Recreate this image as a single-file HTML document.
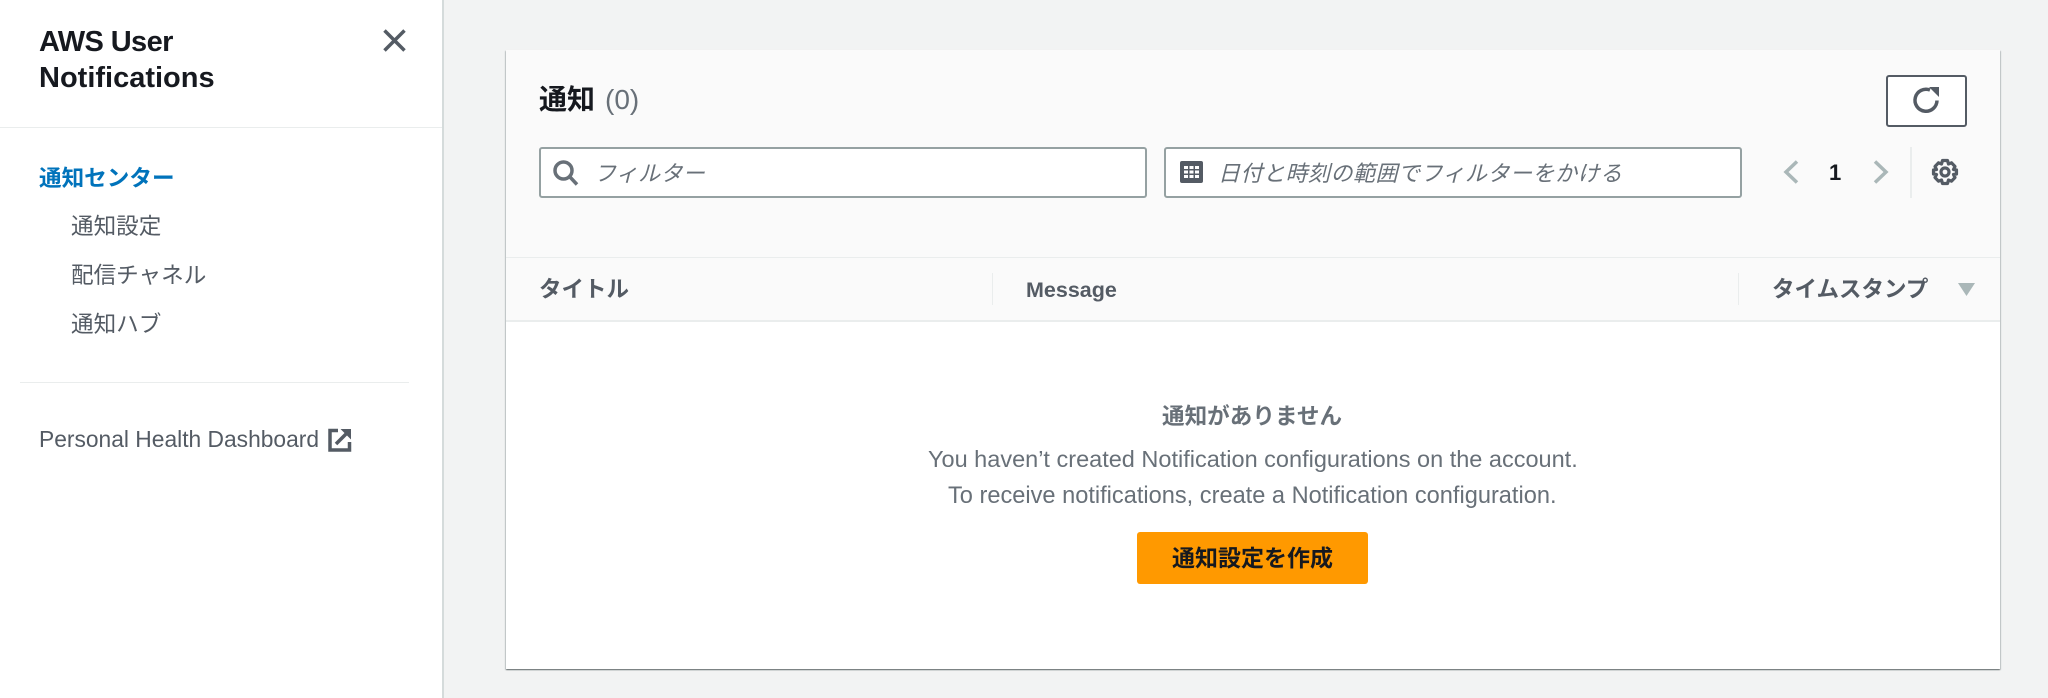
<!DOCTYPE html>
<html lang="ja">
<head>
<meta charset="utf-8">
<title>AWS User Notifications</title>
<style>
html,body{margin:0;padding:0;width:2048px;height:698px;overflow:hidden;background:#f2f3f3;}
body{position:relative;font-family:"Liberation Sans","Noto Sans CJK JP",sans-serif;color:#16191f;filter:blur(.35px);}
.a{position:absolute;}
.t{position:absolute;white-space:nowrap;line-height:36px;height:36px;}
.side{left:0;top:0;width:442px;height:698px;background:#fff;border-right:2px solid #d5dbdb;}
.card{left:506px;top:50px;width:1494px;height:619px;background:#fff;box-shadow:0 1px 1px 0 rgba(30,40,40,.5),1px 1px 1px 0 rgba(0,28,36,.15),-1px 1px 1px 0 rgba(0,28,36,.15);}
.head{left:506px;top:50px;width:1494px;height:271px;background:#fafafa;}
.box{background:#fff;border:2px solid #95a1a2;border-radius:3px;box-sizing:border-box;}
.nav{font-size:22.6px;color:#545b64;}
.ph{font-size:22px;font-style:italic;color:#687078;}
.th{font-size:22.5px;font-weight:bold;color:#545b64;}
.em{font-size:23.5px;color:#687078;}
.hr{background:#eaeded;}
svg{position:absolute;overflow:visible;}
</style>
</head>
<body>
<div class="a side"></div>
<div class="t" style="left:39px;top:24px;font-size:29px;font-weight:bold;letter-spacing:-.6px;">AWS User</div>
<div class="t" style="left:39px;top:60px;font-size:29px;font-weight:bold;">Notifications</div>
<svg style="left:383px;top:29px" width="23" height="23" viewBox="0 0 23 23"><path d="M1.500 1.500L21.500 21.500M21.500 1.500L1.500 21.500" stroke="#545b64" stroke-width="3.500" fill="none"/></svg>
<div class="a hr" style="left:0;top:127px;width:442px;height:1px;"></div>
<div class="t" style="left:39px;top:161px;font-size:22.6px;font-weight:bold;color:#0073bb;">通知センター</div>
<div class="t nav" style="left:71px;top:209px;">通知設定</div>
<div class="t nav" style="left:71px;top:258px;">配信チャネル</div>
<div class="t nav" style="left:71px;top:307px;">通知ハブ</div>
<div class="a hr" style="left:20px;top:382px;width:389px;height:1px;"></div>
<div class="t nav" style="left:39px;top:421px;font-size:22.8px;">Personal Health Dashboard</div>
<svg style="left:328px;top:428px" width="24" height="24" viewBox="0 0 24 24" fill="none" stroke="#545b64" stroke-width="3.500"><path d="M10 2.500H2V22H21.500V14"/><path d="M8 16L18 6"/><path d="M12.500 1H23V11.500Z" fill="#545b64" stroke="none"/></svg>

<div class="a card"></div>
<div class="a head"></div>
<div class="a hr" style="left:506px;top:257px;width:1494px;height:1px;"></div>
<div class="a hr" style="left:506px;top:320px;width:1494px;height:2px;"></div>
<div class="t" style="left:539px;top:82px;font-size:28px;font-weight:bold;">通知</div>
<div class="t" style="left:605px;top:82px;font-size:28px;color:#687078;">(0)</div>

<div class="a box" style="left:1886px;top:75px;width:81px;height:52px;border-color:#545b64;"></div>
<svg style="left:1912px;top:86px" width="28" height="28" viewBox="0 0 28 28" fill="none" stroke="#545b64" stroke-width="3.500"><path d="M25 14.500A11 11 0 1 1 18 4"/><path d="M17 1H27V11Z" fill="#545b64" stroke="none"/></svg>

<div class="a box" style="left:539px;top:147px;width:608px;height:51px;"></div>
<svg style="left:553px;top:160px" width="26" height="26" viewBox="0 0 26 26" fill="none" stroke="#687078" stroke-width="3.500"><circle cx="10.500" cy="10.500" r="8.500"/><path d="M16.500 16.500L24 24.500"/></svg>
<div class="t ph" style="left:594px;top:156px;letter-spacing:.3px;">フィルター</div>

<div class="a box" style="left:1164px;top:147px;width:578px;height:51px;"></div>
<svg style="left:1180px;top:161px" width="23" height="22" viewBox="0 0 23 22"><rect width="23" height="22" rx="2" fill="#545b64"/><g fill="#fff"><rect x="4" y="5" width="4" height="3"/><rect x="9.500" y="5" width="4" height="3"/><rect x="15" y="5" width="4" height="3"/><rect x="4" y="9.500" width="4" height="3"/><rect x="9.500" y="9.500" width="4" height="3"/><rect x="15" y="9.500" width="4" height="3"/><rect x="4" y="14" width="4" height="3"/><rect x="9.500" y="14" width="4" height="3"/><rect x="15" y="14" width="4" height="3"/></g></svg>
<div class="t ph" style="left:1218px;top:156px;letter-spacing:.5px;">日付と時刻の範囲でフィルターをかける</div>

<svg style="left:1783px;top:160px" width="16" height="24" viewBox="0 0 16 24" fill="none" stroke="#aab7b8" stroke-width="3.500"><path d="M14 1.500L3 12L14 22.500"/></svg>
<div class="t" style="left:1829px;top:155px;font-size:22px;font-weight:bold;">1</div>
<svg style="left:1873px;top:160px" width="16" height="24" viewBox="0 0 16 24" fill="none" stroke="#aab7b8" stroke-width="3.500"><path d="M2 1.500L13 12L2 22.500"/></svg>
<div class="a hr" style="left:1910px;top:147px;width:2px;height:51px;"></div>
<svg style="left:1932px;top:159px" width="26" height="26" viewBox="0 0 26 26" fill="none" stroke="#545b64" stroke-width="3.200" stroke-linejoin="round"><path d="M10.500 1.500H15.500L16.500 5L19.500 3.800L23 7.500L21.500 10.500L24.500 11V15L21.500 15.500L23 18.500L19.500 22.200L16.500 21L15.500 24.500H10.500L9.500 21L6.500 22.200L3 18.500L4.500 15.500L1.500 15V11L4.500 10.500L3 7.500L6.500 3.800L9.500 5Z"/><circle cx="13" cy="13" r="4"/></svg>

<div class="t th" style="left:539px;top:272px;">タイトル</div>
<div class="a hr" style="left:992px;top:273px;width:1px;height:32px;"></div>
<div class="t th" style="left:1026px;top:272px;font-size:21.5px;">Message</div>
<div class="a hr" style="left:1738px;top:273px;width:1px;height:32px;"></div>
<div class="t th" style="left:1772px;top:272px;">タイムスタンプ</div>
<svg style="left:1958px;top:283px" width="17" height="13" viewBox="0 0 17 13"><path d="M0 0H17L8.500 13Z" fill="#aab7b8"/></svg>

<div class="t" style="left:1162px;top:399px;font-size:22.6px;font-weight:bold;color:#687078;">通知がありません</div>
<div class="t em" style="left:928px;top:441px;">You haven’t created Notification configurations on the account.</div>
<div class="t em" style="left:948px;top:478px;font-size:23.6px;">To receive notifications, create a Notification configuration.</div>
<div class="a" style="left:1137px;top:532px;width:231px;height:52px;background:#f90;border-radius:3px;"></div>
<div class="t" style="left:1172px;top:540px;font-size:23px;font-weight:bold;">通知設定を作成</div>
</body>
</html>
